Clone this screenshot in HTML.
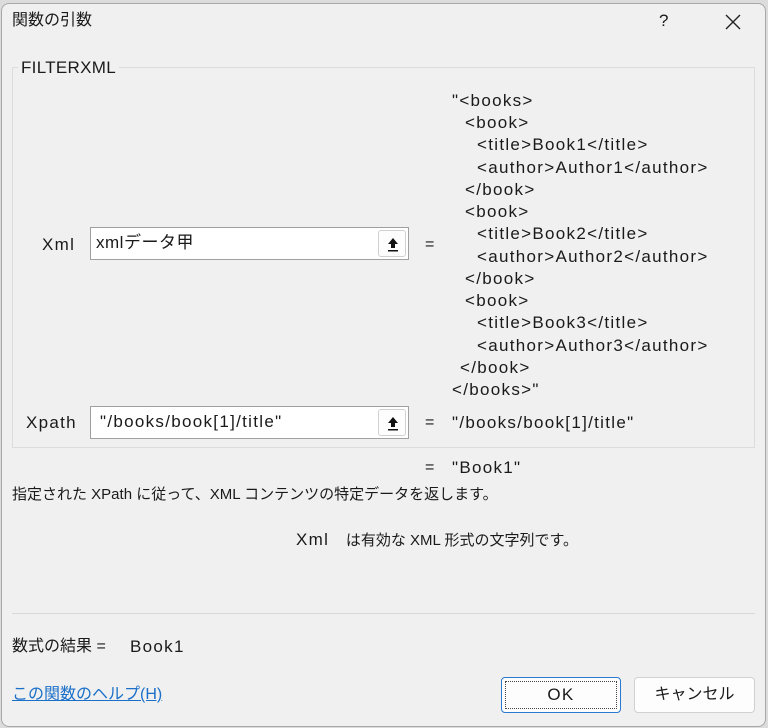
<!DOCTYPE html>
<html><head><meta charset="utf-8"><style>
body{margin:0;width:768px;height:728px;background:#dcdcdc;overflow:hidden;font-family:"Liberation Sans","Noto Sans CJK JP",sans-serif;color:#1a1a1a;font-size:16px}
.dlg{position:absolute;left:1px;top:3px;width:765px;height:724px;background:#f0f0f0;border:1px solid #a8a8a8;border-radius:8px;box-sizing:border-box}
.t{position:absolute;white-space:pre;line-height:20px}
.w{font-size:17px;letter-spacing:1.3px}
.grp{position:absolute;left:12px;top:67px;width:743px;height:381px;border:1px solid #dcdcdc;box-sizing:border-box}
.inp{position:absolute;background:#fff;border:1px solid #a0a0a0;box-sizing:border-box;height:33px}
.ib{position:absolute;right:2px;top:2px;width:28px;height:27px;border:1px solid #d0d0d0;border-radius:3px;background:#fdfdfd;box-sizing:border-box}
.ib svg{position:absolute;left:8px;top:6px}
.btn{position:absolute;height:36px;border-radius:4px;background:#fdfdfd;border:1px solid #d0d0d0;box-sizing:border-box;text-align:center;line-height:34px}
</style></head><body>
<div class="dlg"></div>
<div class="t" style="left:12px;top:11px">関数の引数</div>
<div class="t" style="left:659px;top:11px;font-size:17px">?</div>
<svg style="position:absolute;left:725px;top:14px" width="16" height="16"><path d="M1 1L15 15M15 1L1 15" stroke="#222" stroke-width="1.4"/></svg>
<div class="grp"></div>
<div class="t w" style="left:18px;top:58px;background:#f0f0f0;padding:0 3px;letter-spacing:0.3px">FILTERXML</div>
<div class="t w" style="left:452px;top:91px">"&lt;books&gt;</div>
<div class="t w" style="left:465px;top:113px">&lt;book&gt;</div>
<div class="t w" style="left:477px;top:135px">&lt;title&gt;Book1&lt;/title&gt;</div>
<div class="t w" style="left:477px;top:158px">&lt;author&gt;Author1&lt;/author&gt;</div>
<div class="t w" style="left:465px;top:180px">&lt;/book&gt;</div>
<div class="t w" style="left:465px;top:202px">&lt;book&gt;</div>
<div class="t w" style="left:477px;top:224px">&lt;title&gt;Book2&lt;/title&gt;</div>
<div class="t w" style="left:477px;top:247px">&lt;author&gt;Author2&lt;/author&gt;</div>
<div class="t w" style="left:465px;top:269px">&lt;/book&gt;</div>
<div class="t w" style="left:465px;top:291px">&lt;book&gt;</div>
<div class="t w" style="left:477px;top:313px">&lt;title&gt;Book3&lt;/title&gt;</div>
<div class="t w" style="left:477px;top:336px">&lt;author&gt;Author3&lt;/author&gt;</div>
<div class="t w" style="left:460px;top:358px">&lt;/book&gt;</div>
<div class="t w" style="left:452px;top:380px">&lt;/books&gt;"</div>
<div class="t w" style="left:42px;top:235px">Xml</div>
<div class="inp" style="left:90px;top:227px;width:319px"><div class="t w" style="left:5px;top:5px;letter-spacing:0.5px">xmlデータ甲</div><div class="ib"><svg width="12" height="15"><path d="M6 1L1 7H4V11H8V7H11Z" fill="#111"/><rect x="1" y="13" width="10" height="1.5" fill="#111"/></svg></div></div>
<div class="t" style="left:425px;top:235px">=</div>
<div class="t w" style="left:26px;top:413px">Xpath</div>
<div class="inp" style="left:90px;top:406px;width:319px"><div class="t w" style="left:9px;top:5px">"/books/book[1]/title"</div><div class="ib"><svg width="12" height="15"><path d="M6 1L1 7H4V11H8V7H11Z" fill="#111"/><rect x="1" y="13" width="10" height="1.5" fill="#111"/></svg></div></div>
<div class="t" style="left:425px;top:413px">=</div>
<div class="t w" style="left:452px;top:413px">"/books/book[1]/title"</div>
<div class="t" style="left:425px;top:458px">=</div>
<div class="t w" style="left:452px;top:458px">"Book1"</div>
<div class="t" style="left:12px;top:485px;font-size:15px">指定された XPath に従って、XML コンテンツの特定データを返します。</div>
<div class="t" style="left:296px;top:530px;font-size:15px"><span class="w">Xml</span>    は有効な XML 形式の文字列です。</div>
<div style="position:absolute;left:12px;top:613px;width:743px;height:1px;background:#d8d8d8"></div>
<div class="t" style="left:12px;top:637px">数式の結果 =</div>
<div class="t w" style="left:130px;top:637px">Book1</div>
<div class="t" style="left:12px;top:685px;color:#1a6fc9;text-decoration:underline">この関数のヘルプ(H)</div>
<div class="btn" style="left:501px;top:677px;width:120px;border:1px solid #2a78d0"><div style="position:absolute;left:3px;top:3px;right:3px;bottom:3px;border:1px dotted #444"></div><span class="w">OK</span></div>
<div class="btn" style="left:634px;top:677px;width:121px">キャンセル</div>
</body></html>
